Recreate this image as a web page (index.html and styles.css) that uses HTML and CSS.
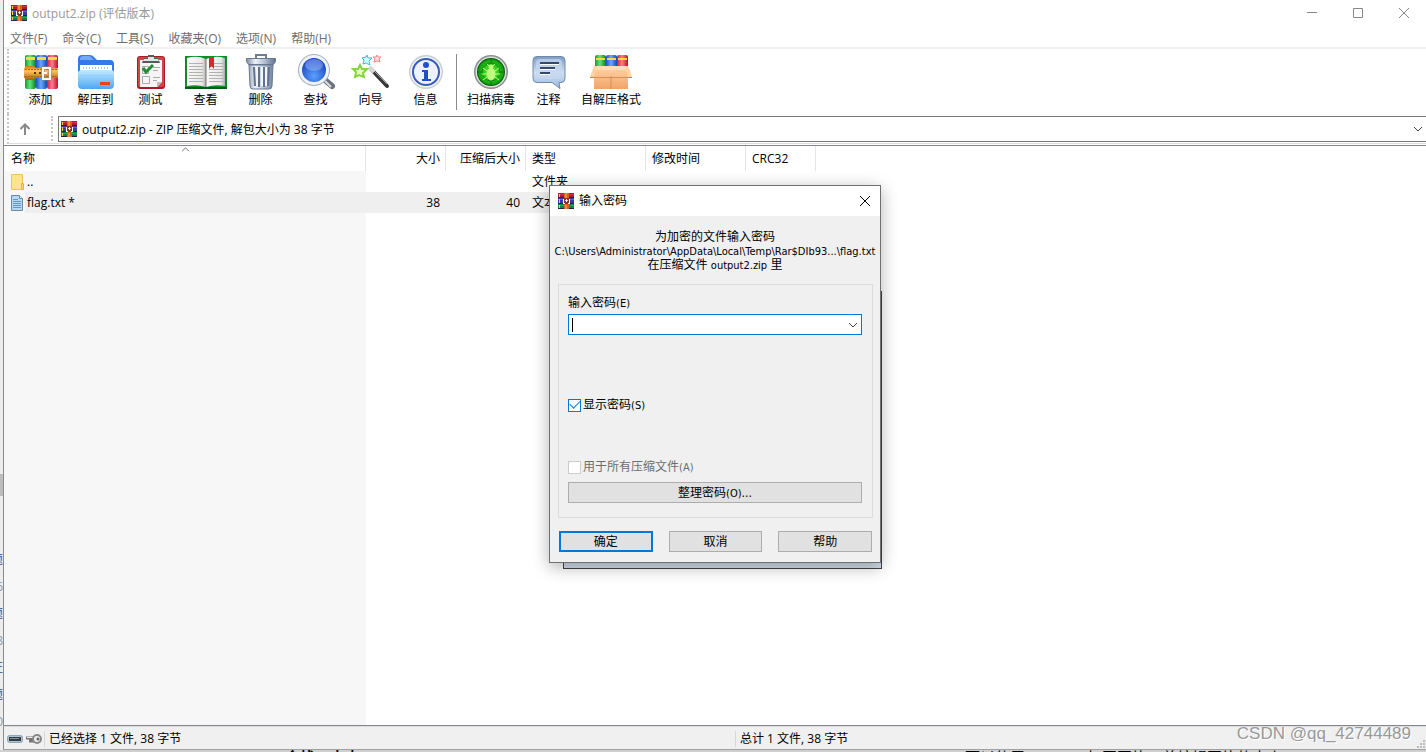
FILE: index.html
```html
<!doctype html>
<html lang="zh-CN">
<head>
  <meta charset="utf-8">
  <title>output2.zip (评估版本)</title>
  <link rel="stylesheet" href="styles.css">
</head>
<body>
  <svg class="defs" aria-hidden="true">
    <defs>
      <linearGradient id="steel" x1="0" x2="1"><stop offset="0" stop-color="#7c8ba3"/><stop offset=".3" stop-color="#eef2f8"/><stop offset=".6" stop-color="#b9c4d5"/><stop offset="1" stop-color="#5f7090"/></linearGradient>
      <linearGradient id="front" x1="0" y1="0" x2="0" y2="1"><stop offset="0" stop-color="#c3e8ff"/><stop offset="1" stop-color="#4ba7f3"/></linearGradient>
      <linearGradient id="leather" x1="0" y1="0" x2="0" y2="1"><stop offset="0" stop-color="#c87a1c"/><stop offset=".35" stop-color="#ffc463"/><stop offset="1" stop-color="#b05a0c"/></linearGradient>
      <linearGradient id="green" x1="0" x2="1"><stop offset="0" stop-color="#129b34"/><stop offset=".45" stop-color="#65e27a"/><stop offset="1" stop-color="#078124"/></linearGradient>
      <linearGradient id="blue" x1="0" x2="1"><stop offset="0" stop-color="#1c50c8"/><stop offset=".45" stop-color="#6aa8ff"/><stop offset="1" stop-color="#1a45b4"/></linearGradient>
      <linearGradient id="red" x1="0" x2="1"><stop offset="0" stop-color="#dc1638"/><stop offset=".45" stop-color="#ff7d91"/><stop offset="1" stop-color="#c50b2b"/></linearGradient>
      <linearGradient id="note" x1="0" y1="0" x2="0" y2="1"><stop offset="0" stop-color="#7b9cc5"/><stop offset=".5" stop-color="#cfe0f4"/><stop offset="1" stop-color="#9bb9dc"/></linearGradient>
      <linearGradient id="page" x1="0" x2="1"><stop offset="0" stop-color="#fafafa"/><stop offset=".8" stop-color="#e8e8e6"/><stop offset="1" stop-color="#aaa"/></linearGradient>
      <linearGradient id="box" x1="0" y1="0" x2="0" y2="1"><stop offset="0" stop-color="#ffd5a8"/><stop offset="1" stop-color="#f2a468"/></linearGradient>
      <radialGradient id="lens" cx=".5" cy=".75" r=".7"><stop offset="0" stop-color="#5ba0ff"/><stop offset="1" stop-color="#1841bd"/></radialGradient>
      <radialGradient id="radar"><stop offset="0" stop-color="#66ff2d"/><stop offset="1" stop-color="#0a9d0b"/></radialGradient>
    </defs>
    <symbol id="rar" viewBox="0 0 16 16">
      <path fill="#a81d38" d="M0 0h16v5H0z"/><path fill="#3c3ba5" d="M0 5h16v6H0z"/><path fill="#118342" d="M0 11h16v5H0z"/>
      <path fill="#cc3a50" d="M0 1h16v1H0z"/><path fill="#6464c4" d="M0 6h16v1H0z"/><path fill="#2ba25a" d="M0 12h16v1H0z"/>
      <path fill="#25214e" d="M0 4h16v1H0zM0 10h16v1H0zM0 15h16v1H0z"/>
      <path fill="#f6cf3a" d="M1 1h1v3H1zM1 6h1v4H1zM1 12h1v3H1z"/>
      <path fill="#d85f1c" d="M6 0h5v16H6z"/><path fill="#f08a35" d="M7 0h2v5H7zM7 12h2v4H7z"/>
      <path fill="#8a3524" d="M5 5h7v6H5z"/><path fill="#fff" d="M5 6h1v5H5zM11 6h1v5h-1zM8 6h1v3H8zM6 10h1v1H6zM10 10h1v1h-1z"/><path fill="#e9c7b0" d="M7 7h1v1H7zM9 7h1v1H9z"/>
    </symbol>
  </svg>

  <aside class="behind-left">
    <i class="thumb"></i>
    <span>题</span><span class="dim">6</span><span>题</span><span class="dim">8</span><span>证</span><span>题</span><span class="dim">0</span>
  </aside>

  <main class="window">
    <header class="titlebar">
      <svg class="icon16"><use href="#rar"/></svg>
      <h1>output2.zip (评估版本)</h1>
      <div class="controls">
        <button aria-label="最小化"><svg viewBox="0 0 12 12"><path d="M1 5.500h10"/></svg></button>
        <button aria-label="最大化"><svg viewBox="0 0 12 12"><path d="M1.500 1.500h9v9h-9z"/></svg></button>
        <button aria-label="关闭"><svg viewBox="0 0 12 12"><path d="M1 1l10 10M11 1L1 11"/></svg></button>
      </div>
    </header>
    <nav class="menu">
      <button>文件(F)</button><button>命令(C)</button><button>工具(S)</button><button>收藏夹(O)</button><button>选项(N)</button><button>帮助(H)</button>
    </nav>

    <div class="toolbar">
      <button>
        <svg viewBox="0 0 44 36">
          <rect x="6" y="1" width="11" height="34" rx="2" fill="url(#green)"/><rect x="17" y="1" width="11" height="34" rx="2" fill="url(#blue)"/><rect x="28" y="1" width="11" height="34" rx="2" fill="url(#red)"/>
          <path fill="#ffd83a" d="M7 3h9v3H7zM18 3h9v3h-9zM29 3h9v3h-9z"/>
          <path fill="url(#leather)" d="M5 14h34v10H5zM7 12h8l3 3v8l-3 3H7l-2-3v-8z"/>
          <path stroke="#a8651a" stroke-dasharray="2 1" d="M6 15.500h33M6 22.500h33"/>
          <path fill="#68340d" d="M15 18h2v2h-2zM20 18h2v2h-2z"/>
          <path fill="none" stroke="#8a8780" stroke-width="3" d="M24 14h7v11h-7z"/><path fill="none" stroke="#f7f7f4" stroke-width="2" d="M24 14h7v11h-7zM24 19h4"/>
        </svg>添加
      </button>
      <button>
        <svg viewBox="0 0 44 36">
          <path fill="#3478ec" d="M4 5q0-4 4-4h8q2 0 4 2l3 3h13q4 0 4 4v20H4z"/><path fill="#72a9fb" d="M6 4q1-2 3-2h7l4 4h-14z"/>
          <path fill="#fff" d="M6 11h32v12H6z"/><path stroke="#aec4da" stroke-width="2" stroke-dasharray="1 2" d="M9 14h27"/>
          <path fill="url(#front)" d="M4 18q1-2 4-2h28q4 0 4 2v13q0 4-4 4H8q-4 0-4-4z"/><path stroke="#8fd0fb" d="M5 21.500h34"/>
          <rect x="26" y="28" width="10" height="3" fill="#ee3e24"/>
        </svg>解压到
      </button>
      <button>
        <svg viewBox="0 0 44 36">
          <rect x="8" y="2" width="28" height="33" rx="3" fill="#a51c26"/><rect x="9" y="3" width="26" height="30" rx="2" fill="#d64448"/>
          <path fill="#f5f5f5" d="M11 6h22v22l-5 5H11z"/><path fill="#bcbcbc" d="M33 28h-5v5z"/>
          <path fill="#595959" d="M15 4h4V1h6v3h4l2 5H13z"/><path fill="#e3e3e3" d="M19 3h6v2h4l1 2H14l1-2h4z"/>
          <path fill="none" stroke="#aaa" d="M13.500 22.500h7v7h-7zM13.500 12.500h6v7h-6zM24 13.500h7M24 16.500h5M24 23.500h7M24 26.500h4"/>
          <path fill="none" stroke="#258b35" stroke-width="3" d="M14 14l3 4 7-7"/>
        </svg>测试
      </button>
      <button>
        <svg viewBox="0 0 44 36">
          <path fill="#108b27" d="M1 2h42v33H1z"/><path fill="#075c18" d="M1 33h42v2H1z"/>
          <path fill="url(#page)" d="M3 4q10-3 19 1v28q-9-3-19-1z"/><path fill="url(#page)" d="M22 5q9-4 19-1v28q-10-2-19 1z"/>
          <path stroke="#b1b1ae" d="M5 9.500h14M5 12.500h14M5 15.500h14M5 18.500h14M5 21.500h14M5 24.500h14M5 27.500h14M25 9.500h14M25 12.500h14M25 15.500h14M25 18.500h14M25 21.500h14M25 24.500h14M25 27.500h14"/>
          <path stroke="#777" d="M22 5v28"/><path fill="#db262e" d="M25 3h5v12l-2.500-3-2.500 3z"/>
        </svg>查看
      </button>
      <button>
        <svg viewBox="0 0 44 36">
          <path fill="none" stroke="#6e7d93" stroke-width="2" d="M17 4V1h10v3"/>
          <path fill="url(#steel)" stroke="#697991" d="M7.500 4.500h29v3l-2 3h-25l-2-3zM10 11h24l-1 21q0 3-3 3H14q-3 0-3-3z"/>
          <path stroke="#60738f" stroke-width="2" d="M15 13l1 19M20 13v20M25 13v20M30 13l-1 19"/><path stroke="#f2f6fb" stroke-width="2" d="M18 13v19M23 13v19M27 13v19"/>
        </svg>删除
      </button>
      <button>
        <svg viewBox="0 0 44 36">
          <path stroke="#6d737d" stroke-width="6" stroke-linecap="round" d="M31 26l7 6"/><path stroke="#d9dee5" stroke-width="2" d="M29 25l8 8"/>
          <circle cx="20" cy="16" r="16" fill="#a6b1be"/><circle cx="20" cy="16" r="15" fill="#edf3f8"/><circle cx="20" cy="16" r="12" fill="url(#lens)"/><ellipse cx="20" cy="11" rx="9" ry="6" fill="#9cb9f7" opacity=".5"/>
        </svg>查找
      </button>
      <button>
        <svg viewBox="0 0 44 36">
          <path stroke="#383838" stroke-width="4" stroke-linecap="round" d="M22 15l16 17"/><path stroke="#999" d="M22 14l16 16"/><path stroke="#d6d6d6" stroke-width="4" d="M20 13l5 5"/>
          <path fill="#e3ffc4" stroke="#85d739" stroke-width="2" d="M11 11l2 4 5 0-4 4 1 4-5-2-4 2 1-5-3-3 5 0z"/>
          <path fill="#d5fbff" stroke="#36bde4" d="M18 1l1 3 4 0-3 3 1 4-4-2-3 1 1-4-2-2 4-1z"/>
          <path fill="#ffdada" stroke="#ec8a8a" d="M28 1l1 2 3 0-2 2 1 3-3-1-3 1 1-3-2-2 3 0z"/>
        </svg>向导
      </button>
      <button>
        <svg viewBox="0 0 44 36">
          <circle cx="22" cy="18" r="17" fill="#c8ced5"/><circle cx="22" cy="18" r="15.500" fill="#f4f5f6"/><circle cx="22" cy="18" r="13" fill="#edf2fc" stroke="#385cb9" stroke-width="2"/>
          <circle cx="22" cy="11" r="3" fill="#244fc4"/><path fill="#244fc4" d="M18 16h6v9h3v2h-9v-2h2v-7h-2z"/>
        </svg>信息
      </button>
      <i class="sep"></i>
      <button class="wide">
        <svg viewBox="0 0 44 36">
          <circle cx="22" cy="18" r="17" fill="#888f8c"/><circle cx="22" cy="18" r="15.500" fill="#dce0dc"/><circle cx="22" cy="18" r="14" fill="#075911"/><circle cx="22" cy="18" r="13" fill="url(#radar)"/>
          <path stroke="#087611" d="M22 5v5M22 26v5M9 18h5M30 18h5"/><circle cx="22" cy="18" r="9" fill="none" stroke="#0b8c18"/>
          <g fill="#bdfb82" stroke="#bdfb82"><ellipse cx="22" cy="20" rx="4" ry="6"/><circle cx="22" cy="13" r="2"/><path fill="none" d="M18 17l-4-3M18 20h-5M18 23l-4 3M26 17l4-3M26 20h5M26 23l4 3M20 12l-2-2M24 12l2-2"/></g>
        </svg>扫描病毒
      </button>
      <button>
        <svg viewBox="0 0 44 36">
          <path fill="url(#note)" stroke="#7189a9" d="M10 2.500h24q4 0 4 4v18q0 4-4 4h-2l1 6-8-6H10q-4 0-4-4v-18q0-4 4-4z"/><rect x="9" y="5" width="26" height="20" rx="4" fill="#c4d7ee" opacity=".7"/>
          <path stroke="#374966" stroke-width="2" d="M13 9h19M13 14h15M13 19h10"/><path stroke="#fff" d="M13 10.500h19M13 15.500h15M13 20.500h10"/>
        </svg>注释
      </button>
      <button class="wider">
        <svg viewBox="0 0 44 36">
          <rect x="6" y="1" width="11" height="15" rx="2" fill="url(#green)"/><rect x="17" y="1" width="11" height="15" rx="2" fill="url(#blue)"/><rect x="28" y="1" width="11" height="15" rx="2" fill="url(#red)"/><path stroke="#ffd83a" stroke-width="2" d="M7 5h9M18 5h9M29 5h9"/>
          <path fill="url(#box)" d="M5 12h34v23H5z"/><path fill="#ffdcb2" d="M5 12h34l-2 4H7z"/><path fill="#ffd4a1" d="M5 12L1 23h4l3-11zM39 12l4 11h-4l-3-11z"/><path fill="#cf7e41" d="M1 23h4v1H1zM39 23h4v1h-4z"/><path stroke="#d68f55" d="M22 22v13M5 23.500h34"/>
        </svg>自解压格式
      </button>
    </div>

    <div class="address">
      <button class="up" aria-label="上一级"><svg viewBox="0 0 12 12"><path d="M6 12V2M1.500 6L6 1.500 10.500 6"/></svg></button>
      <button class="path">
        <svg class="icon16"><use href="#rar"/></svg>
        <span>output2.zip - ZIP 压缩文件, 解包大小为 38 字节</span>
        <svg class="chev" viewBox="0 0 10 6"><path d="M1 1l4 4 4-4"/></svg>
      </button>
    </div>

    <section class="list">
      <table>
        <colgroup><col class="c-name"><col class="c-size"><col class="c-size"><col class="c-type"><col class="c-time"><col class="c-crc"></colgroup>
        <thead>
          <tr><th>名称<svg class="sort" viewBox="0 0 10 6"><path d="M1 5l4-4 4 4"/></svg></th><th class="num">大小</th><th class="num">压缩后大小</th><th>类型</th><th>修改时间</th><th>CRC32</th></tr>
        </thead>
        <tbody>
          <tr>
            <td><div class="file"><svg viewBox="0 0 13 16"><path fill="#ffe48c" stroke="#e9c45a" d="M.500.500h11v15H.500z"/><path fill="#ffd65e" stroke="#e2b63e" d="M10.500 9.500h2v6h-2z"/></svg><span>..</span></div></td>
            <td></td><td></td><td>文件夹</td><td></td><td></td>
          </tr>
          <tr class="selected">
            <td><div class="file"><svg viewBox="0 0 13 16"><path fill="#b5d9f4" stroke="#6a8aa4" d="M.500.500h8l3 3v12H.500z"/><path fill="#fff" stroke="#6a8aa4" d="M8.500.500v3h3"/><path stroke="#6a97bb" d="M2 4.500h5M2 6.500h8M2 8.500h8M2 10.500h8M2 12.500h8"/></svg><span>flag.txt *</span></div></td>
            <td class="num">38</td><td class="num">40</td><td>文本文档</td><td></td><td></td>
          </tr>
        </tbody>
      </table>
    </section>

    <footer class="status">
      <svg class="drive" viewBox="0 0 16 10"><rect x=".5" y="1.500" width="15" height="7" rx="2" fill="#a9c4d2" stroke="#8ca6b5"/><rect x="2" y="3" width="12" height="4" fill="#343c42"/><path stroke="#85909a" d="M3 4.500h9"/></svg>
      <svg class="key" viewBox="0 0 17 12"><path stroke="#777" stroke-width="3" d="M0 5h9M3 8h6"/><path stroke="#eee" d="M1 4.500h8"/><circle cx="11" cy="6" r="4" fill="#eee" stroke="#888" stroke-width="2"/><circle cx="12" cy="6" r="1.500" fill="#666"/></svg>
      <p>已经选择 1 文件, 38 字节</p>
      <p class="total">总计 1 文件, 38 字节</p>
      <svg class="grip" viewBox="0 0 9 9"><path fill="#bbb" d="M6 0h2v2H6zM3 3h2v2H3zM6 3h2v2H6zM0 6h2v2H0zM3 6h2v2H3zM6 6h2v2H6z"/></svg>
    </footer>
  </main>

  <div class="behind-bottom"><b>全栈工少少</b><span>可以使用 mp.co，打开图片，总编辑图片的大小</span></div>

  <div class="behind-dialog"></div>
  <form class="dialog" role="dialog" aria-labelledby="dlg-title">
    <header>
      <svg class="icon16"><use href="#rar"/></svg>
      <h2 id="dlg-title">输入密码</h2>
      <button type="button" class="close" aria-label="关闭"><svg viewBox="0 0 12 12"><path d="M1 1l10 10M11 1L1 11"/></svg></button>
    </header>
    <p class="prompt">为加密的文件输入密码<br><small>C:\Users\Administrator\AppData\Local\Temp\Rar$DIb93...\flag.txt</small><br>在压缩文件 <small>output2.zip</small> 里</p>
    <div class="group">
      <label for="password">输入密码<small>(E)</small></label>
      <div class="combo">
        <i class="caret"></i>
        <input type="text" id="password">
        <button type="button" aria-label="展开"><svg class="chev" viewBox="0 0 10 6"><path d="M1 1l4 4 4-4"/></svg></button>
      </div>
      <div class="check show"><input type="checkbox" id="show" checked><label for="show">显示密码<small>(S)</small></label></div>
      <div class="check all"><input type="checkbox" id="all" disabled><label for="all">用于所有压缩文件<small>(A)</small></label></div>
      <button type="button" class="btn">整理密码<small>(O)</small>...</button>
    </div>
    <div class="actions">
      <button type="submit" class="btn default">确定</button>
      <button type="button" class="btn">取消</button>
      <button type="button" class="btn">帮助</button>
    </div>
  </form>

  <div class="watermark">CSDN @qq_42744489</div>
</body>
</html>
```

FILE: styles.css
```css
* {
  box-sizing: border-box;
}
body {
  display: grid;
  grid-template-columns: 3px minmax(0, 1fr);
  grid-template-rows: minmax(0, 1fr) 2px;
  height: 100vh;
  margin: 0;
  overflow: hidden;
  background: #e4e4e4;
  color: #000;
  font: 12px/16px "Open Sans", "Noto Sans CJK SC", sans-serif;
}
h1, h2, p {
  margin: 0;
  font-size: 12px;
  font-weight: 400;
}
button {
  padding: 0;
  border: 0;
  background: none;
  color: inherit;
  font: inherit;
}
small {
  font-size: 11px;
  line-height: 10px;
}
svg {
  display: block;
  fill: none;
}
.defs {
  position: absolute;
  width: 0;
  height: 0;
}
.icon16 {
  flex: none;
  width: 16px;
  height: 16px;
}
.chev {
  width: 10px;
  height: 6px;
  stroke: #444;
}

/* what shows past the window's edges */
.behind-left {
  display: flex;
  flex-direction: column;
  align-items: flex-end;
  justify-content: flex-end;
  gap: 11px;
  overflow: hidden;
  padding-bottom: 20px;
  background: #ededed;
  color: #3c4a85;
}
.behind-left .thumb {
  width: 3px;
  height: 22px;
  margin-bottom: 45px;
  background: #bdbdbd;
}
.behind-left .dim {
  color: #8a99b0;
}
.behind-bottom {
  display: flex;
  grid-column: 1 / -1;
  justify-content: space-between;
  overflow: hidden;
  padding: 0 144px 0 285px;
  background: #d0d0d0;
  font-size: 15px;
  line-height: 14px;
}

.window {
  display: flex;
  flex-direction: column;
  border-left: 1px solid #8c8c8c;
  border-bottom: 1px solid #a0a0a0;
  background: #fff;
}
.titlebar {
  display: flex;
  align-items: center;
  gap: 5px;
  height: 28px;
  padding: 0 0 2px 7px;
  color: #999;
}
.titlebar h1 {
  padding-top: 1px;
}
.controls {
  display: flex;
  margin-right: -1px;
  margin-left: auto;
}
.controls button {
  display: grid;
  place-items: center;
  width: 46px;
  height: 26px;
}
.controls svg,
.close svg {
  width: 12px;
  height: 12px;
  stroke: #888;
}
.menu {
  display: flex;
  gap: 15px;
  height: 21px;
  padding: 3px 6px 0;
  border-bottom: 2px solid #f0f0f0;
  color: #6d6d6d;
}

.toolbar {
  display: flex;
  height: 65px;
  margin-left: 3px;
  padding: 5px 0 0 4px;
  border-left: 2px dotted #c4c4c4;
}
.toolbar button {
  display: flex;
  flex-direction: column;
  align-items: center;
  gap: 2px;
  width: 55px;
  white-space: nowrap;
}
.toolbar .wide {
  width: 60px;
}
.toolbar .wider {
  width: 70px;
}
.toolbar svg {
  width: 44px;
  height: 36px;
}
.toolbar .sep {
  width: 1px;
  height: 56px;
  margin: 0 4px 0 3px;
  background: #8a8a8a;
}

.address {
  display: flex;
  height: 30px;
  margin-left: 3px;
  padding: 2px 0;
  border-left: 2px dotted #c4c4c4;
  border-bottom: 1px solid #ddd;
}
.up {
  display: grid;
  place-items: center;
  width: 44px;
  padding-right: 10px;
  border-right: 2px dotted #c4c4c4;
}
.up svg {
  width: 12px;
  height: 12px;
  stroke: #888;
  stroke-width: 2;
}
.path {
  display: flex;
  flex: 1;
  align-items: center;
  gap: 5px;
  height: 26px;
  margin-left: 5px;
  padding: 0 3px 0 2px;
  border: 1px solid #7a7a7a;
  border-right: 0;
}
.path span {
  padding-top: 1px;
}
.path .chev {
  margin-left: auto;
}

.list {
  flex: 1;
  margin-top: 1px;
  padding-left: 1px;
  border-top: 1px solid #828790;
  border-bottom: 1px solid #828790;
  background: linear-gradient(90deg, #f7f7f7 362px, #fff 362px);
}
table {
  width: 811px;
  table-layout: fixed;
  border-collapse: separate;
  border-spacing: 0;
}
.c-name { width: 361px; }
.c-size { width: 80px; }
.c-type { width: 120px; }
.c-time { width: 100px; }
.c-crc { width: 70px; }
thead {
  background: #fff;
}
th, td {
  height: 21px;
  padding: 0 6px;
  text-align: left;
  font-weight: 400;
  white-space: nowrap;
}
th {
  position: relative;
  height: 25px;
  border-right: 1px solid #e5e5e5;
}
th.num {
  padding-right: 5px;
}
.num {
  text-align: right;
}
.sort {
  position: absolute;
  top: 1px;
  left: 176px;
  width: 9px;
  height: 5px;
  stroke: #555;
}
td:first-child {
  padding: 0 0 0 6px;
}
.file {
  display: flex;
  align-items: center;
  gap: 1px;
}
.file svg {
  width: 13px;
  height: 16px;
}
.file span {
  flex: 1;
  padding: 2px;
  line-height: 17px;
}
.selected td:not(:first-child),
.selected .file span {
  background: #efefef;
}

.status {
  display: flex;
  align-items: center;
  height: 23px;
  padding: 1px 0 0 3px;
  border-top: 1px solid #ddd;
  background: #f0f0f0;
}
.drive {
  width: 16px;
  height: 10px;
}
.key {
  width: 17px;
  height: 12px;
  margin: 0 1px 0 3px;
}
.status p {
  flex: 1;
  padding-left: 4px;
  border-left: 1px solid #d7d7d7;
}
.status .total {
  flex: 0 1 682px;
}
.grip {
  align-self: flex-end;
  width: 9px;
  height: 9px;
}

.behind-dialog {
  position: absolute;
  top: 291px;
  left: 563px;
  width: 319px;
  height: 278px;
  border: 1px solid #444;
  background: #d3deec;
}
.dialog {
  position: absolute;
  top: 185px;
  left: 549px;
  width: 332px;
  border: 1px solid #707070;
  background: #f0f0f0;
  box-shadow: 0 4px 16px rgba(0, 0, 0, .3);
  font-family: "DejaVu Sans Condensed", "Noto Sans CJK SC", sans-serif;
  line-height: 14px;
}
.dialog header {
  display: flex;
  align-items: center;
  gap: 5px;
  height: 30px;
  padding-left: 8px;
  background: #fff;
}
.close {
  display: grid;
  place-items: center;
  width: 31px;
  height: 30px;
  margin-left: auto;
}
.close svg {
  stroke: #000;
}
.prompt {
  padding: 14px 0 12px;
  text-align: center;
  white-space: nowrap;
}
.group {
  margin: 0 7px 0 8px;
  padding: 11px 10px 14px 9px;
  border: 1px solid #dcdcdc;
}
.group > label {
  display: block;
}
.combo {
  display: flex;
  align-items: center;
  height: 21px;
  margin: 4px 0 63px;
  padding-left: 3px;
  border: 1px solid #0078d7;
  background: #fff;
}
.caret {
  width: 1px;
  height: 14px;
  background: #000;
}
.combo input {
  flex: 1;
  min-width: 0;
  height: 19px;
  padding: 0 2px;
  border: 0;
  outline: 0;
  background: none;
  font: inherit;
}
.combo button {
  display: grid;
  place-items: center;
  width: 17px;
  height: 19px;
}
.check {
  display: flex;
  align-items: center;
  gap: 2px;
  height: 14px;
}
.check input {
  appearance: none;
  width: 13px;
  height: 13px;
  margin: 0;
  border: 1px solid #ccc;
  background: #fff;
}
.check input:checked {
  display: grid;
  place-items: center;
  border-color: #0078d7;
}
.check input:checked::after {
  width: 9px;
  height: 5px;
  margin-bottom: 4px;
  border: solid #0078d7;
  border-width: 0 0 1px 1px;
  transform: rotate(-45deg);
  content: '';
}
.check.show {
  margin-bottom: 48px;
}
.check.all {
  margin-bottom: 8px;
  color: #6d6d6d;
}
.btn {
  height: 21px;
  border: 1px solid #adadad;
  background: #e1e1e1;
}
.group .btn {
  display: block;
  width: 100%;
}
.actions {
  display: grid;
  grid-template-columns: repeat(3, 1fr);
  gap: 16px;
  padding: 13px 8px 10px 9px;
}
.btn.default {
  border: 2px solid #0078d7;
}

.watermark {
  position: absolute;
  right: 15px;
  bottom: 8px;
  color: #999;
  font: 17px/20px "Liberation Sans", sans-serif;
  text-shadow: 1px 1px #fff;
}
```
